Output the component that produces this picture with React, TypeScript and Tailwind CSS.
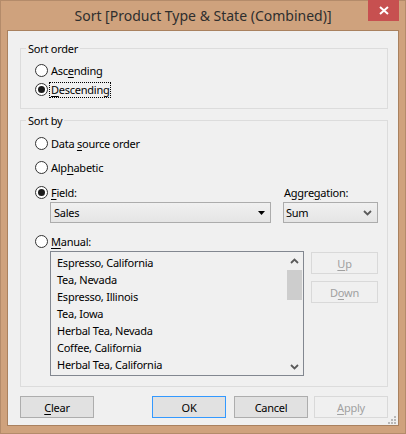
import React from 'react';

const LIST_ITEMS = [
  'Espresso, California',
  'Tea, Nevada',
  'Espresso, Illinois',
  'Tea, Iowa',
  'Herbal Tea, Nevada',
  'Coffee, California',
  'Herbal Tea, California',
];

// label with an access-key underline
function Key({ pre = '', k, post = '' }: { pre?: string; k: string; post?: string }) {
  return (
    <span>
      {pre}
      <span className="underline underline-offset-[2px]">{k}</span>
      {post}
    </span>
  );
}

function Radio({ checked }: { checked?: boolean }) {
  return (
    <span className="flex items-center justify-center w-[13px] h-[13px] rounded-full border border-[#333333] bg-white shrink-0">
      {checked && <span className="w-[7px] h-[7px] rounded-full bg-[#1c1c1c]" />}
    </span>
  );
}

function Chevron({ up }: { up?: boolean }) {
  return (
    <svg width="9" height="6" viewBox="0 0 9 6">
      <polyline
        points={up ? '1,5 4.5,1.5 8,5' : '1,1 4.5,4.5 8,1'}
        fill="none"
        stroke="#5a5a5a"
        strokeWidth="1.8"
      />
    </svg>
  );
}

function Button({ children, focused, disabled }: { children: React.ReactNode; focused?: boolean; disabled?: boolean }) {
  return (
    <div
      className={`flex items-center justify-center w-[74px] h-[22px] border ${
        focused
          ? 'border-[#3399ff] bg-[#e1e1e1]'
          : disabled
          ? 'border-[#d9d9d9] bg-[#f0f0f0] text-[#a0a0a0]'
          : 'border-[#adadad] bg-[#e1e1e1]'
      }`}
    >
      {children}
    </div>
  );
}

export default function App() {
  return (
    <div className="w-[406px] h-[434px] bg-[#cfa27d] border border-[#b48b6a] flex flex-col font-['Noto_Sans','Open_Sans',sans-serif] text-[11px] tracking-[-0.25px] leading-[15px] text-black select-none">
      {/* Title bar */}
      <div className="relative h-[29px] flex items-center justify-center text-[14px] tracking-normal text-[#2e2e2e] pb-[1px]">
        Sort [Product Type &amp; State (Combined)]
        <div className="absolute right-[6px] top-[-1px] w-[31px] h-[21px] bg-[#c75050] flex items-center justify-center">
          <svg width="10" height="9" viewBox="0 0 10 9">
            <path d="M1 1 L9 8 M9 1 L1 8" stroke="#ffffff" strokeWidth="2" />
          </svg>
        </div>
      </div>

      {/* Client area */}
      <div className="relative mx-[6px] mb-[7px] flex-1 border border-[#a9815f] bg-[#f0f0f0] pl-[12px] pr-[10px] pt-[10px] flex flex-col">
        {/* Sort order */}
        <fieldset className="border border-[#dcdcdc]">
          <legend className="ml-[5px] px-[2px] leading-[15px]">Sort order</legend>
          <div className="pl-[14px] pt-[5px] pb-[9px]">
            <div className="flex items-center gap-[3px] h-[19px]">
              <Radio />
              <Key pre="Asc" k="e" post="nding" />
            </div>
            <div className="flex items-center gap-[2px] h-[19px]">
              <Radio checked />
              <span className="outline outline-1 outline-dotted outline-[#000] outline-offset-0 px-[1px] leading-[14px]">
                <Key k="D" post="escending" />
              </span>
            </div>
          </div>
        </fieldset>

        {/* Sort by */}
        <fieldset className="border border-[#dcdcdc] mt-[4px]">
          <legend className="ml-[5px] px-[2px] leading-[15px]">Sort by</legend>
          <div className="pl-[14px] pt-[3px] pb-[10px]">
            <div className="flex items-center gap-[3px] h-[24px]">
              <Radio />
              <Key pre="Data " k="s" post="ource order" />
            </div>
            <div className="flex items-center gap-[3px] h-[24px]">
              <Radio />
              <Key pre="Alp" k="h" post="abetic" />
            </div>
            <div className="flex items-center h-[20px] mt-[3px]">
              <div className="w-[248px] flex items-center gap-[3px]">
                <Radio checked />
                <Key k="F" post="ield:" />
              </div>
              <span className="ml-px">
                <Key pre="Aggre" k="g" post="ation:" />
              </span>
            </div>

            {/* Dropdowns */}
            <div className="flex ml-[15px] h-[21px]">
              <div className="w-[221px] h-[21px] border border-[#acacac] bg-gradient-to-b from-[#f0f0f0] to-[#e5e5e5] flex items-center justify-between pl-[3px] pr-[5px]">
                <span>Sales</span>
                <svg width="7" height="4" viewBox="0 0 7 4">
                  <polygon points="0,0 7,0 3.5,4" fill="#000000" />
                </svg>
              </div>
              <div className="w-[95px] h-[21px] ml-[12px] border border-[#acacac] bg-gradient-to-b from-[#f0f0f0] to-[#e5e5e5] flex items-center justify-between pl-[2px] pr-[5px]">
                <span>Sum</span>
                <Chevron />
              </div>
            </div>

            <div className="flex items-center gap-[3px] h-[20px] mt-[8px]">
              <Radio />
              <Key k="M" post="anual:" />
            </div>

            {/* Manual list */}
            <div className="flex ml-[15px]">
              <div className="w-[254px] h-[125px] border border-[#828790] bg-[#f0f0f0] flex">
                <div className="flex-1 pl-[6px] pt-[2px]">
                  {LIST_ITEMS.map((item) => (
                    <div key={item} className="h-[17px] leading-[17px] whitespace-nowrap">
                      {item}
                    </div>
                  ))}
                </div>
                <div className="w-[17px] flex flex-col">
                  <div className="h-[17px] flex items-center justify-center">
                    <Chevron up />
                  </div>
                  <div className="mt-[1px] mx-[1px] h-[30px] bg-[#cdcdcd]" />
                  <div className="flex-1" />
                  <div className="h-[17px] flex items-center justify-center">
                    <Chevron />
                  </div>
                </div>
              </div>
              <div className="ml-[7px] flex flex-col">
                <div className="mt-[1px] w-[67px] h-[22px] border border-[#d9d9d9] bg-[#f0f0f0] text-[#a0a0a0] flex items-center justify-center">
                  <Key k="U" post="p" />
                </div>
                <div className="mt-[7px] w-[67px] h-[22px] border border-[#d9d9d9] bg-[#f0f0f0] text-[#a0a0a0] flex items-center justify-center">
                  <Key pre="D" k="o" post="wn" />
                </div>
              </div>
            </div>
          </div>
        </fieldset>

        {/* Bottom buttons */}
        <div className="flex mt-[9px]">
          <Button>
            <Key k="C" post="lear" />
          </Button>
          <div className="ml-auto flex">
            <Button focused>OK</Button>
            <div className="ml-[8px]">
              <Button>Cancel</Button>
            </div>
            <div className="ml-[6px]">
              <Button disabled>
                <Key k="A" post="pply" />
              </Button>
            </div>
          </div>
        </div>

        {/* size grip */}
        <svg className="absolute right-[2px] bottom-[1px]" width="9" height="9" viewBox="0 0 9 9">
          {[
            [7, 1],
            [4, 4],
            [7, 4],
            [1, 7],
            [4, 7],
            [7, 7],
          ].map(([x, y]) => (
            <rect key={`${x}-${y}`} x={x} y={y} width="2" height="2" fill="#b8b8b8" />
          ))}
        </svg>
      </div>
    </div>
  );
}
